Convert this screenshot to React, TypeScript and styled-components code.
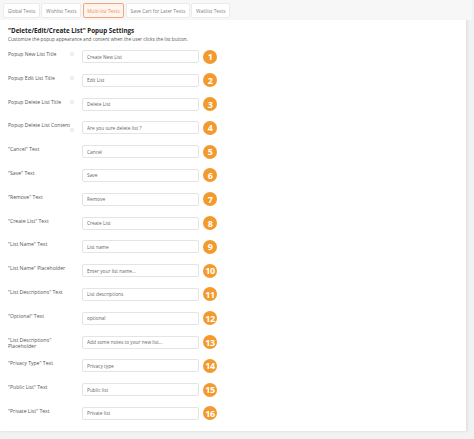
import React from 'react';
import styled, { createGlobalStyle } from 'styled-components';

const GlobalStyle = createGlobalStyle`
  html, body {
    margin: 0;
    padding: 0;
    background: #f2f2f3;
    font-family: "Open Sans", "Noto Sans", sans-serif;
  }
`;

const tabs = [
  'Global Texts',
  'Wishlist Texts',
  'Multi-list Texts',
  'Save Cart for Later Texts',
  'Waitlist Texts',
];

interface fieldType {
  label: string;
  value: string;
  info?: boolean;
}

const fields: fieldType[] = [
  { label: 'Popup New List Title', value: 'Create New List', info: true },
  { label: 'Popup Edit List Title', value: 'Edit List', info: true },
  { label: 'Popup Delete List Title', value: 'Delete List', info: true },
  { label: 'Popup Delete List Content', value: 'Are you sure delete list ?', info: true },
  { label: '"Cancel" Text', value: 'Cancel' },
  { label: '"Save" Text', value: 'Save' },
  { label: '"Remove" Text', value: 'Remove' },
  { label: '"Create List" Text', value: 'Create List' },
  { label: '"List Name" Text', value: 'List name' },
  { label: '"List Name" Placeholder', value: 'Enter your list name...' },
  { label: '"List Descriptions" Text', value: 'List descriptions' },
  { label: '"Optional" Text', value: 'optional' },
  { label: '"List Descriptions" Placeholder', value: 'Add some notes to your new list...' },
  { label: '"Privacy Type" Text', value: 'Privacy type' },
  { label: '"Public List" Text', value: 'Public list' },
  { label: '"Private List" Text', value: 'Private list' },
];

const InfoIcon = () => (
  <Info viewBox="0 0 10 10">
    <circle cx="5" cy="5" r="4.2" fill="none" stroke="#c8c8c8" strokeWidth="1" />
    <rect x="4.5" y="4.2" width="1" height="3" fill="#c8c8c8" />
    <rect x="4.5" y="2.6" width="1" height="1" fill="#c8c8c8" />
  </Info>
);

export default function App() {
  return (
    <>
      <GlobalStyle />
      <Page>
        <TabBar>
          {tabs.map((t, i) => (
            <Tab key={t} active={i === 2}>
              {t}
            </Tab>
          ))}
        </TabBar>
        <Panel>
          <Title>"Delete/Edit/Create List" Popup Settings</Title>
          <Subtitle>
            Customize the popup appearance and content when the user clicks the list button.
          </Subtitle>
          <Form>
            {fields.map((f, i) => (
              <Row key={f.label}>
                <Label>
                  <span>{f.label}</span>
                  {f.info && <InfoIcon />}
                </Label>
                <Input defaultValue={f.value} />
                <Badge>{i + 1}</Badge>
              </Row>
            ))}
          </Form>
        </Panel>
      </Page>
    </>
  );
}

const Page = styled.div`
  width: 474px;
  height: 439px;
  overflow: hidden;
`;

const TabBar = styled.div`
  height: 20px;
  box-sizing: border-box;
  padding: 3px 3px 0 3px;
  display: flex;
  gap: 1.5px;
  background: #f7f7f7;
  margin-right: 2px;
`;

const Tab = styled.div<{ active?: boolean }>`
  height: 15px;
  box-sizing: border-box;
  padding: 0 3.7px;
  display: flex;
  align-items: center;
  font-size: 4.8px;
  white-space: nowrap;
  border-radius: 2px;
  border: 1px solid ${({ active }) => (active ? '#f2a57a' : '#ebebeb')};
  background: ${({ active }) => (active ? '#fff5ee' : '#ffffff')};
  color: ${({ active }) => (active ? '#ec8e55' : '#808080')};
`;

const Panel = styled.div`
  width: 467px;
  height: 411px;
  box-sizing: border-box;
  background: #ffffff;
  border-right: 1px solid #e3e3e3;
  box-shadow: 1px 1px 2px rgba(0, 0, 0, 0.06);
  padding: 7px 8px 0 8px;
`;

const Title = styled.div`
  font-size: 6.3px;
  font-weight: 700;
  color: #222;
  line-height: 8px;
`;

const Subtitle = styled.div`
  font-size: 4.7px;
  color: #555;
  line-height: 6px;
  margin-top: 1px;
`;

const Form = styled.div`
  margin-top: 8px;
  display: flex;
  flex-direction: column;
  gap: 10.8px;
`;

const Row = styled.div`
  display: grid;
  grid-template-columns: 72px 117px 14px;
  grid-template-rows: 13px;
  column-gap: 2px;
  align-items: start;
`;

const Label = styled.div`
  display: flex;
  flex-wrap: wrap;
  align-items: center;
  font-size: 5.1px;
  line-height: 6px;
  color: #555;
  padding-top: 1px;
  margin-right: 8px;

  span {
    flex-shrink: 0;
    max-width: 100%;
    margin-right: 2px;
  }
`;

const Info = styled.svg`
  width: 4px;
  height: 4px;
  margin-left: auto;
  margin-right: -2px;
`;

const Input = styled.input`
  grid-column: 2;
  height: 13px;
  box-sizing: border-box;
  border: 1px solid #e4e4e4;
  border-radius: 2px;
  padding: 0 4px;
  font-family: inherit;
  font-size: 4.8px;
  color: #666;
  background: #fff;
  outline: none;
`;

const Badge = styled.div`
  width: 14px;
  height: 14px;
  margin-left: 2px;
  border-radius: 50%;
  background: #f29a2e;
  color: #fff;
  font-weight: 700;
  font-size: 9px;
  display: flex;
  align-items: center;
  justify-content: center;
  margin-top: -0.5px;
  letter-spacing: -0.5px;
`;
